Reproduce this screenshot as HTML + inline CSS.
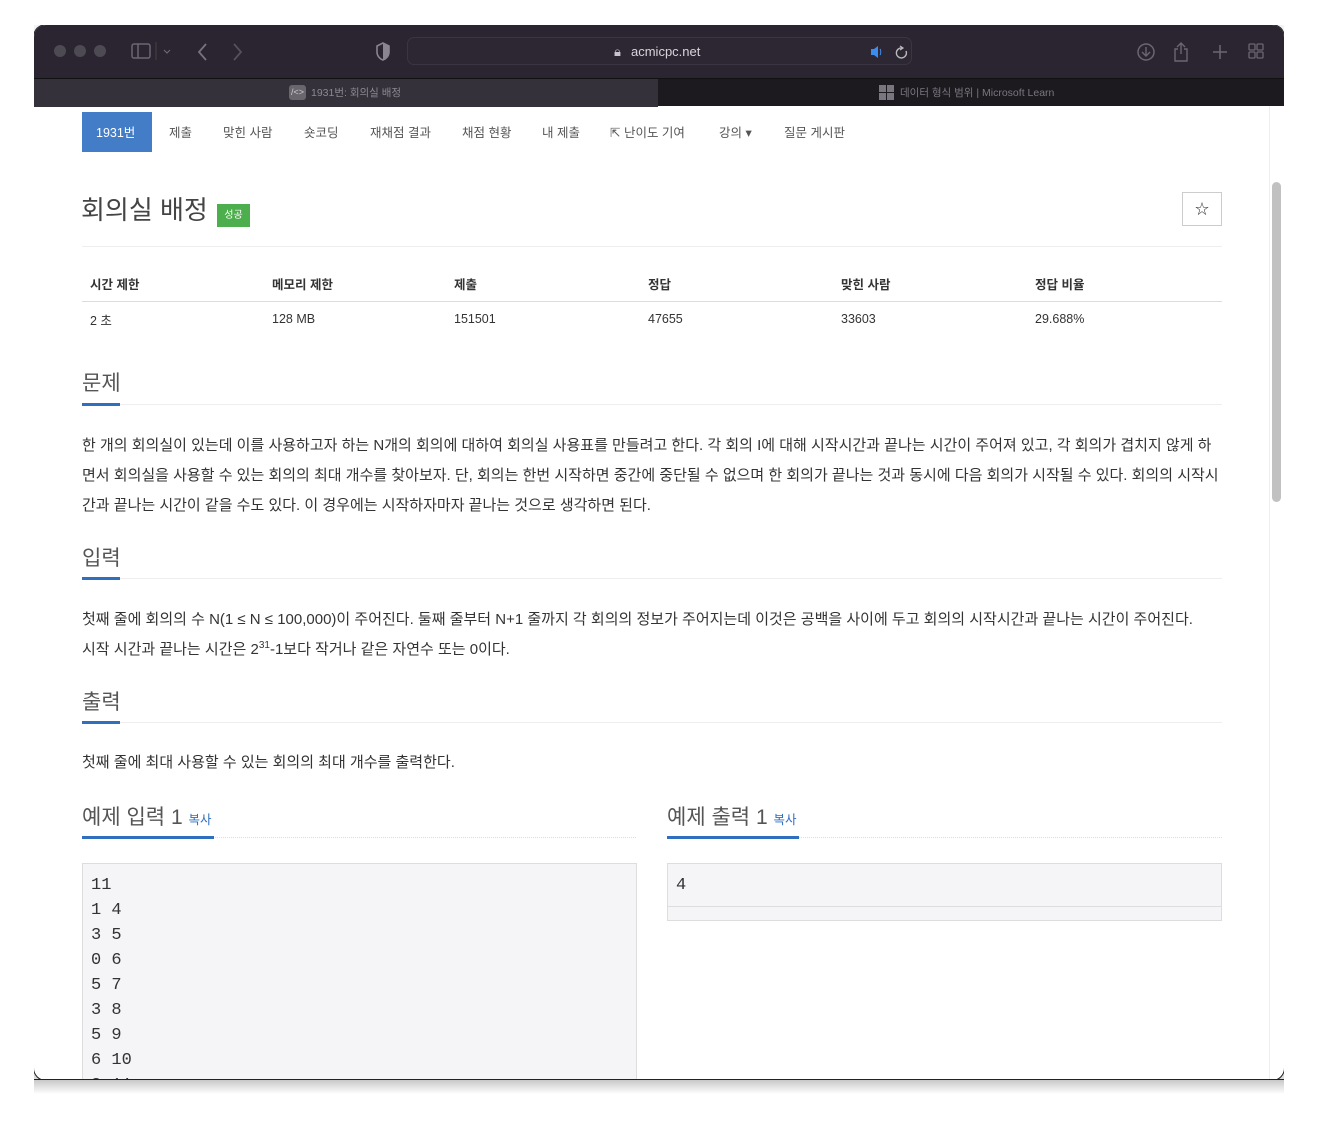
<!DOCTYPE html>
<html><head><meta charset="utf-8"><style>
*{margin:0;padding:0;box-sizing:border-box}
body{width:1318px;height:1123px;background:#fff;position:relative;overflow:hidden;font-family:"Liberation Sans","Noto Sans CJK KR",sans-serif;color:#333}
.win{position:absolute;left:34px;top:25px;width:1250px;height:1055px;border-radius:12px;overflow:hidden;background:#fff;box-shadow:0 10px 30px rgba(0,0,0,.35),0 0 0 1px #222}
.tb{position:absolute;left:0;top:0;width:1250px;height:53px;background:#2a2530}
.tabs{position:absolute;left:0;top:53px;width:1250px;height:28px;background:#1c1a1e;border-top:1px solid #111}
.tab1{position:absolute;left:0;top:0;width:624px;height:28px;background:#35313a}
.a{position:absolute;white-space:nowrap}
.dot{position:absolute;top:20px;width:12px;height:12px;border-radius:50%;background:#4e4a54}
.nav{font-size:12.5px;color:#555}
.th{font-size:12.5px;font-weight:bold;color:#333}
.td{font-size:12.5px;color:#333}
h2{position:absolute;font-weight:normal;font-size:21px;color:#555;white-space:nowrap}
.ul{position:absolute;height:3px;background:#2f6fbd}
.hr{position:absolute;height:1px;background:#eee}
pre{font-family:"Liberation Mono","DejaVu Sans Mono",monospace;font-size:17px;line-height:25px;color:#333}
sup{font-size:10px;line-height:0;vertical-align:6px}
</style></head><body>
<div class="win">
<div class="tb">
 <div class="dot" style="left:20px"></div><div class="dot" style="left:40px"></div><div class="dot" style="left:60px"></div>
 <svg class="a" style="left:96px;top:17px" width="60" height="20"><rect x="2" y="2" width="18" height="14" rx="2" fill="none" stroke="#6b6672" stroke-width="1.5"/><line x1="8" y1="2" x2="8" y2="16" stroke="#6b6672" stroke-width="1.5"/><line x1="26" y1="0" x2="26" y2="18" stroke="#444" /><path d="M34 8l3 3 3-3" fill="none" stroke="#6b6672" stroke-width="1.2"/></svg>
 <svg class="a" style="left:160px;top:16px" width="60" height="22"><path d="M12 3l-7 8 7 8" fill="none" stroke="#77727d" stroke-width="1.8"/><path d="M40 3l7 8-7 8" fill="none" stroke="#55505a" stroke-width="1.8"/></svg>
 <svg class="a" style="left:341px;top:17px" width="16" height="20"><path d="M8 1L2 4v6c0 4 3 7 6 8 3-1 6-4 6-8V4z" fill="none" stroke="#8a8590" stroke-width="1.6"/><path d="M8 1v17c3-1 6-4 6-8V4z" fill="#8a8590"/></svg>
 <div class="a" style="left:373px;top:12px;width:505px;height:28px;border:1px solid #3a3540;border-radius:7px;background:#2c2732"></div>
 <div class="a" style="left:580px;top:19px;font-size:13px;color:#c8c4cc">🔒︎</div>
 <div class="a" style="left:597px;top:19px;font-size:13px;color:#d8d4dc">acmicpc.net</div>
 <svg class="a" style="left:836px;top:20px" width="40" height="14"><path d="M1 4h3l4-3v12l-4-3H1z" fill="#3b8cf0"/><path d="M10 4c1 1 1 5 0 6" stroke="#3b8cf0" fill="none"/><path d="M32 3a5 5 0 1 0 4 3" fill="none" stroke="#bbb" stroke-width="1.4"/><path d="M30 1l3 2-3 2" fill="none" stroke="#bbb" stroke-width="1.2"/></svg>
 <svg class="a" style="left:1100px;top:15px" width="130" height="24"><circle cx="12" cy="12" r="8" fill="none" stroke="#6b6672" stroke-width="1.5"/><path d="M12 7v9M8 12l4 4 4-4" fill="none" stroke="#6b6672" stroke-width="1.4"/><path d="M44 9h-3v12h12V9h-3M47 3v11M43 7l4-4 4 4" fill="none" stroke="#6b6672" stroke-width="1.4"/><path d="M86 5v14M79 12h14" stroke="#6b6672" stroke-width="1.5"/><rect x="115" y="4" width="6" height="6" rx="1" fill="none" stroke="#6b6672" stroke-width="1.3"/><rect x="123" y="4" width="6" height="6" rx="1" fill="none" stroke="#6b6672" stroke-width="1.3"/><rect x="115" y="12" width="6" height="6" rx="1" fill="none" stroke="#6b6672" stroke-width="1.3"/><rect x="123" y="12" width="6" height="6" rx="1" fill="none" stroke="#6b6672" stroke-width="1.3"/></svg>
</div>
<div class="tabs"><div class="tab1"></div>
 <div class="a" style="left:255px;top:6px;width:17px;height:15px;background:#6a666e;border-radius:3px;font-size:9px;color:#ccc;text-align:center;line-height:15px">/&lt;&gt;</div>
 <div class="a" style="left:277px;top:6px;font-size:10.5px;color:#8d8992">1931번: 회의실 배정</div>
 <svg class="a" style="left:845px;top:6px" width="15" height="15"><rect x="0" y="0" width="7" height="7" fill="#7a7680"/><rect x="8" y="0" width="7" height="7" fill="#7a7680"/><rect x="0" y="8" width="7" height="7" fill="#7a7680"/><rect x="8" y="8" width="7" height="7" fill="#7a7680"/></svg>
 <div class="a" style="left:866px;top:6px;font-size:10.5px;color:#7a7680">데이터 형식 범위 | Microsoft Learn</div>
</div>
<div class="a" style="left:1238px;top:157px;width:9px;height:320px;border-radius:5px;background:#c1c1c1"></div>
<div class="a" style="left:1235px;top:81px;width:1px;height:974px;background:#eee"></div>
</div>

<div class="a" style="left:82px;top:112px;width:70px;height:40px;background:#437dc8"></div>
<div class="a nav" style="left:96px;top:122px;color:#fff;">1931번</div>
<div class="a nav" style="left:169px;top:122px">제출</div>
<div class="a nav" style="left:223px;top:122px">맞힌 사람</div>
<div class="a nav" style="left:304px;top:122px">숏코딩</div>
<div class="a nav" style="left:370px;top:122px">재채점 결과</div>
<div class="a nav" style="left:462px;top:122px">채점 현황</div>
<div class="a nav" style="left:542px;top:122px">내 제출</div>
<div class="a nav" style="left:610px;top:122px">⇱ 난이도 기여</div>
<div class="a nav" style="left:719px;top:122px">강의 ▾</div>
<div class="a nav" style="left:784px;top:122px">질문 게시판</div>

<div class="a" style="left:81px;top:190px;font-size:26px;color:#444">회의실 배정</div>
<div class="a" style="left:217px;top:204px;width:33px;height:23px;background:#4cae4c;color:#fff;font-size:10px;text-align:center;line-height:23px">성공</div>
<div class="a" style="left:1182px;top:192px;width:40px;height:34px;border:1px solid #ccc;text-align:center;line-height:32px;font-size:14px;color:#333">☆</div>
<div class="hr" style="left:82px;top:246px;width:1140px"></div>

<div class="a th" style="left:90px;top:274px">시간 제한</div>
<div class="a th" style="left:272px;top:274px">메모리 제한</div>
<div class="a th" style="left:454px;top:274px">제출</div>
<div class="a th" style="left:648px;top:274px">정답</div>
<div class="a th" style="left:841px;top:274px">맞힌 사람</div>
<div class="a th" style="left:1035px;top:274px">정답 비율</div>
<div class="hr" style="left:82px;top:301px;width:1140px;background:#ddd"></div>
<div class="a td" style="left:90px;top:310px">2 초</div>
<div class="a td" style="left:272px;top:312px">128 MB</div>
<div class="a td" style="left:454px;top:312px">151501</div>
<div class="a td" style="left:648px;top:312px">47655</div>
<div class="a td" style="left:841px;top:312px">33603</div>
<div class="a td" style="left:1035px;top:312px">29.688%</div>

<h2 style="left:82px;top:367px">문제</h2>
<div class="hr" style="left:82px;top:404px;width:1140px"></div><div class="ul" style="left:82px;top:403px;width:38px"></div>
<div class="a" style="left:82px;top:431px;font-size:15px;line-height:30px;color:#333;white-space:nowrap">한 개의 회의실이 있는데 이를 사용하고자 하는 N개의 회의에 대하여 회의실 사용표를 만들려고 한다. 각 회의 I에 대해 시작시간과 끝나는 시간이 주어져 있고, 각 회의가 겹치지 않게 하<br>면서 회의실을 사용할 수 있는 회의의 최대 개수를 찾아보자. 단, 회의는 한번 시작하면 중간에 중단될 수 없으며 한 회의가 끝나는 것과 동시에 다음 회의가 시작될 수 있다. 회의의 시작시<br>간과 끝나는 시간이 같을 수도 있다. 이 경우에는 시작하자마자 끝나는 것으로 생각하면 된다.</div>

<h2 style="left:82px;top:542px">입력</h2>
<div class="hr" style="left:82px;top:578px;width:1140px"></div><div class="ul" style="left:82px;top:577px;width:38px"></div>
<div class="a" style="left:82px;top:605px;font-size:15px;line-height:30px;color:#333;white-space:nowrap">첫째 줄에 회의의 수 N(1 ≤ N ≤ 100,000)이 주어진다. 둘째 줄부터 N+1 줄까지 각 회의의 정보가 주어지는데 이것은 공백을 사이에 두고 회의의 시작시간과 끝나는 시간이 주어진다.<br>시작 시간과 끝나는 시간은 2<sup>31</sup>-1보다 작거나 같은 자연수 또는 0이다.</div>

<h2 style="left:82px;top:686px">출력</h2>
<div class="hr" style="left:82px;top:722px;width:1140px"></div><div class="ul" style="left:82px;top:721px;width:38px"></div>
<div class="a" style="left:82px;top:752px;font-size:15px;line-height:22px;color:#333">첫째 줄에 최대 사용할 수 있는 회의의 최대 개수를 출력한다.</div>

<h2 style="left:82px;top:801px">예제 입력 1 <span style="font-size:12.5px;color:#2f6fbd">복사</span></h2>
<div class="hr" style="left:82px;top:837px;width:554px;border-top:1px dotted #ddd;background:none"></div><div class="ul" style="left:82px;top:836px;width:132px"></div>
<div class="a" style="left:82px;top:863px;width:555px;height:240px;background:#f5f5f7;border:1px solid #ddd;padding:9px 8px"><pre>11
1 4
3 5
0 6
5 7
3 8
5 9
6 10
8 11</pre></div>

<h2 style="left:667px;top:801px">예제 출력 1 <span style="font-size:12.5px;color:#2f6fbd">복사</span></h2>
<div class="hr" style="left:667px;top:837px;width:555px;border-top:1px dotted #ddd;background:none"></div><div class="ul" style="left:667px;top:836px;width:132px"></div>
<div class="a" style="left:667px;top:863px;width:555px;height:58px;background:#f5f5f7;border:1px solid #ddd;padding:9px 8px"><pre>4</pre><div style="position:absolute;left:0;right:0;top:42px;height:1px;background:#ddd"></div></div>

<div class="a" style="left:0;top:1080px;width:1318px;height:43px;background:#fff"></div>
<div class="a" style="left:34px;top:1080px;width:1250px;height:14px;background:linear-gradient(#c8c8c8,#fff)"></div>
<div class="a" style="left:34px;top:1079px;width:1250px;height:1px;background:#222"></div>
<div class="a" style="left:0;top:0;width:34px;height:1123px;background:#fff"></div>
<div class="a" style="left:1284px;top:0;width:34px;height:1123px;background:#fff"></div>
<div class="a" style="left:0;top:0;width:1318px;height:25px;background:#fff"></div>
</body></html>
